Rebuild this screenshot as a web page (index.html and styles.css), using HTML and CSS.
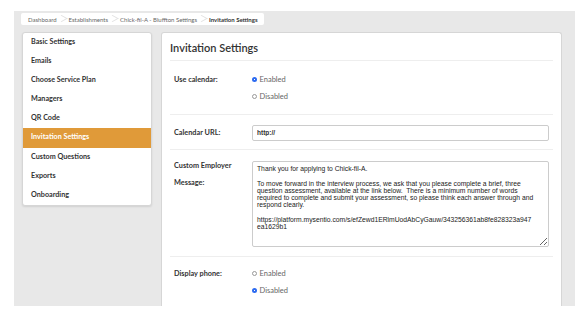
FILE: index.html
```html
<!DOCTYPE html>
<html lang="en">
  <head>
    <meta charset="UTF-8" />
    <meta name="viewport" content="width=device-width, initial-scale=1.0" />
    <title>Invitation Settings</title>
    <link rel="stylesheet" href="styles.css">
  </head>
  <body>
    <div class="page">
      <!-- Breadcrumb -->
      <nav class="breadcrumb">
        <a href="#">Dashboard</a>
        <span class="sep"></span>
        <a href="#">Establishments</a>
        <span class="sep"></span>
        <a href="#">Chick-fil-A - Bluffton Settings</a>
        <span class="sep"></span>
        <span class="current">Invitation Settings</span>
      </nav>

      <div class="layout">
        <!-- Settings menu -->
        <ul class="side-menu">
          <li>Basic Settings</li>
          <li>Emails</li>
          <li>Choose Service Plan</li>
          <li>Managers</li>
          <li>QR Code</li>
          <li class="active">Invitation Settings</li>
          <li>Custom Questions</li>
          <li>Exports</li>
          <li>Onboarding</li>
        </ul>

        <!-- Main panel -->
        <section class="panel">
          <h1>Invitation Settings</h1>

          <div class="form-row row-calendar">
            <div class="label">Use calendar:</div>
            <div class="field">
              <label class="radio"><span class="dot checked"></span>Enabled</label>
              <label class="radio"><span class="dot"></span>Disabled</label>
            </div>
          </div>

          <div class="form-row row-url">
            <div class="label">Calendar URL:</div>
            <div class="field">
              <input class="text-input" type="text" value="http://" />
            </div>
          </div>

          <div class="form-row row-message">
            <div class="label">Custom Employer<br />Message:</div>
            <div class="field">
              <textarea class="message">Thank you for applying to Chick-fil-A.

To move forward in the interview process, we ask that you please complete a brief, three question assessment, available at the link below.  There is a minimum number of words required to complete and submit your assessment, so please think each answer through and respond clearly.

https://platform.mysentio.com/s/efZewd1ERlmUodAbCyGauw/343256361ab8fe828323a947
ea1629b1</textarea>
            </div>
          </div>

          <div class="form-row row-phone">
            <div class="label">Display phone:</div>
            <div class="field">
              <label class="radio"><span class="dot"></span>Enabled</label>
              <label class="radio"><span class="dot checked"></span>Disabled</label>
            </div>
          </div>
        </section>
      </div>
    </div>
  </body>
</html>
```

FILE: styles.css
```css
/* Global Styles */
* {
  box-sizing: border-box;
}
body {
  margin: 0;
  background: #fff;
  font-family: Lato, "Open Sans", sans-serif;
  color: #333;
}
.page {
  margin: 11px 0 0 14px;
  width: 561px;
  height: 295px;
  background: #e8e8e8;
  padding: 2px 0 0 7px;
  overflow: hidden;
}

/* Breadcrumb */
.breadcrumb {
  display: flex;
  align-items: center;
  width: fit-content;
  height: 12px;
  padding: 0 6px 0 7px;
  background: #fff;
  border-radius: 2px;
  font-size: 6px;
  color: #666;
}
.breadcrumb a {
  color: #666;
  text-decoration: none;
}
.breadcrumb .sep {
  width: 12px;
  height: 12px;
  position: relative;
}
.breadcrumb .sep::after {
  content: "";
  position: absolute;
  left: 1px;
  top: 2px;
  width: 6px;
  height: 6px;
  border-top: 1px solid #e2e2e2;
  border-right: 1px solid #e2e2e2;
  transform: rotate(45deg) skew(-15deg, -15deg);
}
.breadcrumb .current {
  font-weight: 700;
  color: #333;
}

/* Layout */
.layout {
  display: flex;
  align-items: flex-start;
  gap: 9px;
  margin-top: 7px;
  padding-left: 1px;
}

/* Side menu */
.side-menu {
  list-style: none;
  margin: 0;
  padding: 0;
  width: 130px;
  background: #fff;
  border: 1px solid #d6d6d6;
  border-radius: 3px;
  box-shadow: 0 1px 2px rgba(0, 0, 0, 0.1);
  overflow: hidden;
}
.side-menu li {
  height: 19.1px;
  line-height: 17px;
  padding-left: 8px;
  font-size: 7.2px;
  font-weight: 700;
  color: #333;
}
.side-menu li.active {
  background: #e09a39;
  color: #fff;
}

/* Main panel */
.panel {
  width: 401px;
  height: 280px;
  background: #fff;
  border: 1px solid #d6d6d6;
  border-bottom: none;
  border-radius: 3px 3px 0 0;
  padding: 0 8px 0 8px;
}
.panel h1 {
  margin: 0;
  padding: 8px 0 5px 0;
  font-size: 11px;
  line-height: 14px;
  font-weight: 600;
  color: #333;
  border-bottom: 1px solid #eee;
}
.form-row {
  display: flex;
  padding-left: 4px;
  border-bottom: 1px solid #eee;
}
.row-calendar {
  padding-top: 10px;
  padding-bottom: 9px;
}
.row-url {
  padding-top: 9.5px;
  padding-bottom: 8.5px;
}
.row-message {
  padding-top: 11px;
  padding-bottom: 9px;
}
.row-phone {
  padding-top: 8px;
  border-bottom: none;
}
.label {
  width: 78px;
  flex-shrink: 0;
  font-size: 7.3px;
  font-weight: 700;
  line-height: 17px;
  color: #333;
}
.row-url .label {
  line-height: 16px;
}
.row-message .label {
  margin-top: -4.5px;
}
.field {
  flex: 1;
  padding-right: 4px;
}
.radio {
  display: flex;
  align-items: center;
  height: 17px;
  font-size: 7.5px;
  color: #666;
}
.dot {
  width: 5px;
  height: 5px;
  margin-right: 2.5px;
  border: 0.6px solid #999;
  border-radius: 50%;
  background: #fff;
}
.dot.checked {
  border: none;
  background: radial-gradient(circle, #fff 0 0.7px, #2d6bf0 0.9px);
}
.text-input {
  display: block;
  width: 100%;
  height: 16px;
  border: 1px solid #ccc;
  border-radius: 2px;
  padding: 0 4px;
  font-family: "Liberation Sans", Arial, sans-serif;
  font-size: 6.5px;
  font-weight: 700;
  color: #333;
}
.message {
  display: block;
  width: 100%;
  height: 86px;
  border: 1px solid #ccc;
  border-radius: 2px;
  padding: 3px 4px;
  font-family: "Liberation Sans", Arial, sans-serif;
  font-size: 6.75px;
  line-height: 7.3px;
  color: #222;
  resize: vertical;
  overflow: hidden;
}
```
